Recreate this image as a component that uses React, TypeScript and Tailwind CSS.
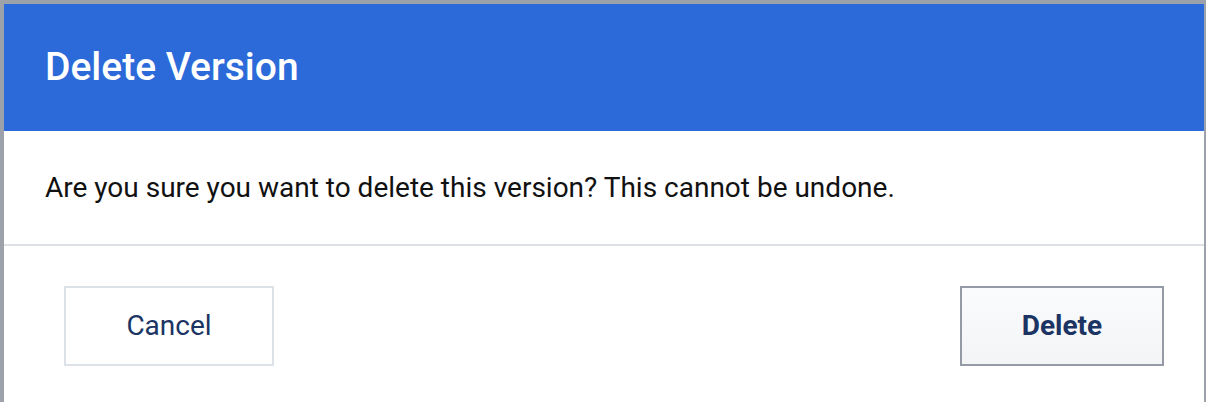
export default function App() {
  return (
    <div className="flex h-[402px] w-[1206px] overflow-hidden bg-[#9ca1aa] pl-[4px] pt-[4px] pr-[2px] font-['Roboto',_'Liberation_Sans',_sans-serif]">
      <div className="flex flex-1 flex-col bg-white">
        <header className="flex h-[127px] shrink-0 items-center bg-[#2b6ad8] px-[41px]">
          <h1 className="text-[39px] font-medium text-white">Delete Version</h1>
        </header>
        <div className="flex h-[113px] shrink-0 items-center px-[41px]">
          <p className="text-[28px] text-[#111]">
            Are you sure you want to delete this version? This cannot be undone.
          </p>
        </div>
        <div className="h-[2px] bg-[#dde0e4]" />
        <div className="flex items-start justify-between pl-[60px] pr-[40px] pt-[40px]">
          <button className="flex h-[80px] w-[210px] items-center justify-center border-2 border-[#dde1e8] bg-white text-[28px] text-[#1b3463]">
            Cancel
          </button>
          <button className="flex h-[80px] w-[204px] items-center justify-center border-2 border-[#959ba6] bg-gradient-to-b from-[#fafbfc] to-[#f3f4f5] text-[28px] font-bold text-[#1b3463]">
            Delete
          </button>
        </div>
      </div>
    </div>
  )
}
